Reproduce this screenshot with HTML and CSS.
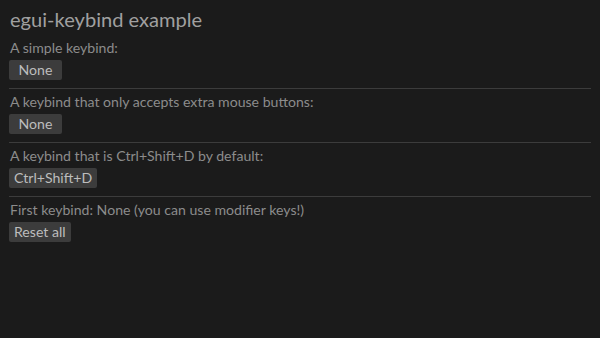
FILE: index.html
```html
<!DOCTYPE html>
<html>
<head>
<meta charset="utf-8">
<link rel="stylesheet" href="styles.css">
</head>
<body>
<main class="panel">
  <h1 class="heading">egui-keybind example</h1>
  <section class="group">
    <div class="label">A simple keybind:</div>
    <div class="row"><button class="btn keybind">None</button></div>
  </section>
  <hr class="sep">
  <section class="group">
    <div class="label">A keybind that only accepts extra mouse buttons:</div>
    <div class="row"><button class="btn keybind">None</button></div>
  </section>
  <hr class="sep">
  <section class="group">
    <div class="label">A keybind that is Ctrl+Shift+D by default:</div>
    <div class="row"><button class="btn keybind">Ctrl+Shift+D</button></div>
  </section>
  <hr class="sep">
  <section class="group">
    <div class="label">First keybind: None (you can use modifier keys!)</div>
    <div class="row"><button class="btn">Reset all</button></div>
  </section>
</main>
</body>
</html>
```
FILE: styles.css
```css
html, body {
  margin: 0;
  padding: 0;
  background: #1b1b1b;
  height: 100%;
}
body {
  font-family: "Lato", "Liberation Sans", sans-serif;
  font-size: 14.1px;
  color: #8c8c8c;
}
.panel {
  display: flex;
  flex-direction: column;
  padding: 7px 9px 0 10px;
}
.heading {
  margin: 0 0 8px 0;
  font-size: 20.1px;
  font-weight: 400;
  line-height: 24px;
  color: #a0a0a0;
}
.group {
  display: flex;
  flex-direction: column;
  gap: 4px;
}
.label {
  line-height: 17px;
  white-space: nowrap;
}
.row {
  display: flex;
}
.btn {
  font: inherit;
  color: #bdbdbd;
  background: #3c3c3c;
  border: none;
  border-radius: 2px;
  height: 20px;
  line-height: 20px;
  padding: 0 5px;
  margin-left: -1px;
}
.keybind {
  min-width: 53px;
  text-align: center;
}
.sep {
  border: none;
  height: 1px;
  background: #3c3c3c;
  margin: 8px 0 4px -1px;
}
```
